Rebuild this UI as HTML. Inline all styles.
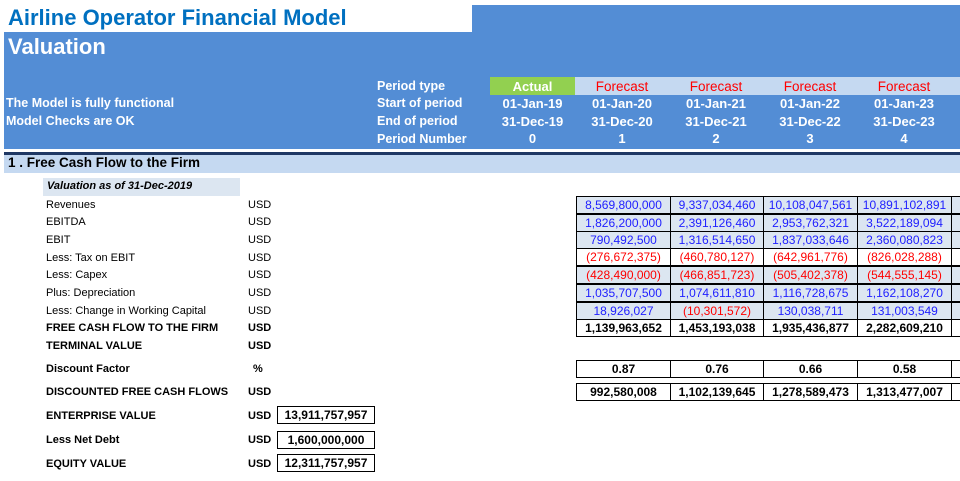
<!DOCTYPE html>
<html><head><meta charset="utf-8"><style>
*{margin:0;padding:0;box-sizing:border-box}
body{width:960px;height:481px;background:#fff;position:relative;overflow:hidden;font-family:"Liberation Sans",Arial,sans-serif}
.a{position:absolute;white-space:nowrap}
.w{color:#fff;font-weight:bold;font-size:12.5px}
.d{font-size:13px}
.c{text-align:center}
.lbl{position:absolute;left:46px;font-size:11px;color:#000}
.b{font-weight:bold}
.u{position:absolute;left:248px;font-size:11px;color:#000}
.cell{position:absolute;height:18px;border:1px solid #000;font-size:12px;text-align:center;line-height:16px}
.bl{color:#2020ff}.rd{color:#ff0000}.lt{background:#dce6f1}
.f{color:#f00;font-size:13.5px}
</style></head><body>
<div class="a" style="left:472px;top:5px;width:488px;height:30px;background:#538dd5"></div>
<div class="a" style="left:4px;top:32px;width:956px;height:117px;background:#538dd5"></div>
<div class="a" style="left:8px;top:5px;font-size:22px;font-weight:bold;color:#0070c0">Airline Operator Financial Model</div>
<div class="a" style="left:8px;top:34px;font-size:22px;font-weight:bold;color:#fff">Valuation</div>
<div class="a w" style="left:6px;top:96px">The Model is fully functional</div>
<div class="a w" style="left:6px;top:114px">Model Checks are OK</div>
<div class="a w" style="left:377px;top:79px">Period type</div>
<div class="a w" style="left:377px;top:96px">Start of period</div>
<div class="a w" style="left:377px;top:114px">End of period</div>
<div class="a w" style="left:377px;top:132px">Period Number</div>
<div class="a" style="left:490px;top:77px;width:85px;height:18px;background:#92d050"></div>
<div class="a" style="left:575px;top:77px;width:385px;height:18px;background:#c5d9f1"></div>
<div class="a w c d" style="left:490px;top:79px;width:85px">Actual</div>
<div class="a c f" style="left:575px;top:79px;width:94px">Forecast</div>
<div class="a c f" style="left:669px;top:79px;width:94px">Forecast</div>
<div class="a c f" style="left:763px;top:79px;width:94px">Forecast</div>
<div class="a c f" style="left:857px;top:79px;width:94px">Forecast</div>
<div class="a w c d" style="left:490px;top:96px;width:85px">01-Jan-19</div>
<div class="a w c d" style="left:575px;top:96px;width:94px">01-Jan-20</div>
<div class="a w c d" style="left:669px;top:96px;width:94px">01-Jan-21</div>
<div class="a w c d" style="left:763px;top:96px;width:94px">01-Jan-22</div>
<div class="a w c d" style="left:857px;top:96px;width:94px">01-Jan-23</div>
<div class="a w c d" style="left:490px;top:114px;width:85px">31-Dec-19</div>
<div class="a w c d" style="left:575px;top:114px;width:94px">31-Dec-20</div>
<div class="a w c d" style="left:669px;top:114px;width:94px">31-Dec-21</div>
<div class="a w c d" style="left:763px;top:114px;width:94px">31-Dec-22</div>
<div class="a w c d" style="left:857px;top:114px;width:94px">31-Dec-23</div>
<div class="a w c d" style="left:490px;top:131px;width:85px">0</div>
<div class="a w c d" style="left:575px;top:131px;width:94px">1</div>
<div class="a w c d" style="left:669px;top:131px;width:94px">2</div>
<div class="a w c d" style="left:763px;top:131px;width:94px">3</div>
<div class="a w c d" style="left:857px;top:131px;width:94px">4</div>
<div class="a" style="left:4px;top:152px;width:956px;height:3px;background:#1f3864"></div>
<div class="a" style="left:4px;top:155px;width:956px;height:18px;background:#c5d9f1"></div>
<div class="a" style="left:8px;top:155px;font-size:13.5px;font-weight:bold">1 . Free Cash Flow to the Firm</div>
<div class="a" style="left:43px;top:178px;width:197px;height:18px;background:#dce6f1"></div>
<div class="a" style="left:47px;top:180px;font-size:11px;font-weight:bold;font-style:italic">Valuation as of 31-Dec-2019</div>
<div class="lbl" style="top:199px">Revenues</div><div class="u" style="top:199px">USD</div>
<div class="lbl" style="top:216px">EBITDA</div><div class="u" style="top:216px">USD</div>
<div class="lbl" style="top:234px">EBIT</div><div class="u" style="top:234px">USD</div>
<div class="lbl" style="top:252px">Less: Tax on EBIT</div><div class="u" style="top:252px">USD</div>
<div class="lbl" style="top:269px">Less: Capex</div><div class="u" style="top:269px">USD</div>
<div class="lbl" style="top:287px">Plus: Depreciation</div><div class="u" style="top:287px">USD</div>
<div class="lbl" style="top:305px">Less: Change in Working Capital</div><div class="u" style="top:305px">USD</div>
<div class="lbl b" style="top:322px">FREE CASH FLOW TO THE FIRM</div><div class="u b" style="top:322px">USD</div>
<div class="lbl b" style="top:340px">TERMINAL VALUE</div><div class="u b" style="top:340px">USD</div>
<div class="lbl b" style="top:363px">Discount Factor</div><div class="u b" style="top:363px;left:253px">%</div>
<div class="lbl b" style="top:386px">DISCOUNTED FREE CASH FLOWS</div><div class="u b" style="top:386px">USD</div>
<div class="lbl b" style="top:410px">ENTERPRISE VALUE</div><div class="u b" style="top:410px">USD</div>
<div class="lbl b" style="top:434px">Less Net Debt</div><div class="u b" style="top:434px">USD</div>
<div class="lbl b" style="top:458px">EQUITY VALUE</div><div class="u b" style="top:458px">USD</div>
<div class="cell b" style="left:277px;top:406px;width:98px">13,911,757,957</div>
<div class="cell b" style="left:277px;top:431px;width:98px">1,600,000,000</div>
<div class="cell b" style="left:277px;top:454px;width:98px">12,311,757,957</div>
<div id="t"></div>
<script>
var xs=[576,670,763,857,951,1000];
var rows=[
[196,'bl lt',['8,569,800,000','9,337,034,460','10,108,047,561','10,891,102,891','']],
[214,'bl lt',['1,826,200,000','2,391,126,460','2,953,762,321','3,522,189,094','']],
[231,'bl lt',['790,492,500','1,316,514,650','1,837,033,646','2,360,080,823','']],
[248,'rd',['(276,672,375)','(460,780,127)','(642,961,776)','(826,028,288)','']],
[266,'rd lt',['(428,490,000)','(466,851,723)','(505,402,378)','(544,555,145)','']],
[284,'bl lt',['1,035,707,500','1,074,611,810','1,116,728,675','1,162,108,270','']],
[302,'bl lt',['18,926,027','(10,301,572)','130,038,711','131,003,549','']],
[319,'b',['1,139,963,652','1,453,193,038','1,935,436,877','2,282,609,210','']],
[360,'b',['0.87','0.76','0.66','0.58','']],
[383,'b',['992,580,008','1,102,139,645','1,278,589,473','1,313,477,007','']]];
var h='';
rows.forEach(function(r){for(var i=0;i<5;i++){var cls=r[1];var t=r[2][i];
if(r[0]==302&&i==1)cls='rd lt';
h+='<div class="cell '+cls+'" style="left:'+xs[i]+'px;top:'+r[0]+'px;width:'+(xs[i+1]-xs[i]+1)+'px">'+t+'</div>';}});
document.getElementById('t').innerHTML=h;
</script>
</body></html>
